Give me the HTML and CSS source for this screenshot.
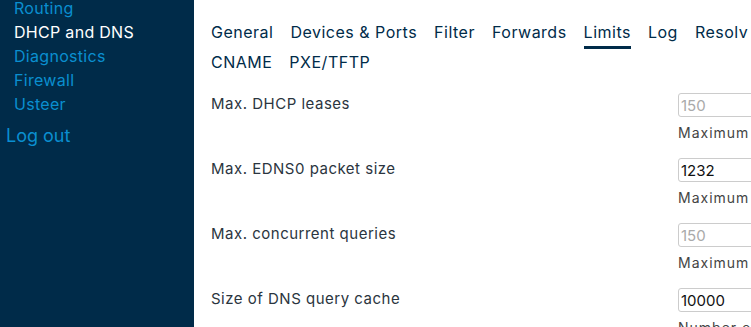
FILE: index.html
```html
<!DOCTYPE html>
<html>
<head>
<meta charset="utf-8">
<link rel="stylesheet" href="styles.css">
</head>
<body>
<div class="page">
  <nav class="sidebar">
    <ul class="menu">
      <li><a class="link">Routing</a></li>
      <li><a class="link active">DHCP and DNS</a></li>
      <li><a class="link">Diagnostics</a></li>
      <li><a class="link">Firewall</a></li>
      <li><a class="link">Usteer</a></li>
    </ul>
    <a class="logout">Log out</a>
  </nav>
  <main class="main">
    <ul class="tabs">
      <li class="tab">General</li>
      <li class="tab">Devices &amp; Ports</li>
      <li class="tab">Filter</li>
      <li class="tab">Forwards</li>
      <li class="tab current">Limits</li>
      <li class="tab">Log</li>
      <li class="tab">Resolv &amp; Hosts</li>
      <li class="tab">CNAME</li>
      <li class="tab">PXE/TFTP</li>
    </ul>
    <div class="form">
      <div class="row">
        <div class="label">Max. DHCP leases</div>
        <div class="field">
          <input class="input" type="text" placeholder="150">
          <div class="desc">Maximum allowed number of active DHCP leases.</div>
        </div>
      </div>
      <div class="row">
        <div class="label">Max. EDNS0 packet size</div>
        <div class="field">
          <input class="input" type="text" value="1232">
          <div class="desc">Maximum allowed size of EDNS0 UDP packets.</div>
        </div>
      </div>
      <div class="row">
        <div class="label">Max. concurrent queries</div>
        <div class="field">
          <input class="input" type="text" placeholder="150">
          <div class="desc">Maximum allowed number of concurrent DNS queries.</div>
        </div>
      </div>
      <div class="row">
        <div class="label">Size of DNS query cache</div>
        <div class="field">
          <input class="input" type="text" value="10000">
          <div class="desc">Number of cached DNS entries, 10000 is maximum.</div>
        </div>
      </div>
    </div>
  </main>
</div>
</body>
</html>
```
FILE: styles.css
```css
html, body {
  margin: 0;
  padding: 0;
  overflow: hidden;
  background: #fff;
}
body {
  font-family: "Inter", "Noto Sans", sans-serif;
  width: 751px;
  height: 327px;
}
.page {
  display: flex;
  height: 327px;
}
.sidebar {
  width: 194px;
  flex: none;
  background: #002b49;
  box-sizing: border-box;
}
.menu {
  list-style: none;
  margin: -4px 0 0 0;
  padding: 0 0 0 14px;
}
.link {
  display: block;
  font-size: 16px;
  letter-spacing: 0.3px;
  line-height: 24px;
  color: #0a8fd0;
}
.link.active {
  color: #fff;
}
.logout {
  display: block;
  margin: 8px 0 0 6px;
  font-size: 18px;
  line-height: 24px;
  color: #0a8fd0;
}
.main {
  flex: none;
  width: 900px;
  padding: 20px 0 0 17px;
  box-sizing: border-box;
}
.tabs {
  list-style: none;
  margin: 0;
  padding: 0;
  display: flex;
  flex-wrap: wrap;
  width: 620px;
  column-gap: 17px;
  row-gap: 1px;
}
.tab {
  font-size: 16px;
  letter-spacing: 0.5px;
  line-height: 24px;
  color: #002b49;
  padding-bottom: 2px;
  border-bottom: 3px solid transparent;
}
.tab.current {
  border-bottom-color: #002b49;
}
.form {
  margin-top: 14px;
}
.row {
  display: flex;
  height: 65px;
}
.label {
  width: 467px;
  flex: none;
  font-size: 15px;
  letter-spacing: 0.5px;
  line-height: 20px;
  color: #2b3540;
  padding-top: 1px;
}
.field {
  flex: none;
  width: 300px;
}
.input {
  display: block;
  width: 260px;
  height: 24px;
  box-sizing: border-box;
  border: 1px solid #ccc;
  border-radius: 3px;
  padding: 0 2px;
  font-family: inherit;
  font-size: 15px;
  color: #111;
  outline: none;
}
.input::placeholder {
  color: #aaa;
}
.desc {
  margin-top: 6px;
  font-size: 14px;
  letter-spacing: 1px;
  line-height: 20px;
  color: #444;
  white-space: nowrap;
}
```
